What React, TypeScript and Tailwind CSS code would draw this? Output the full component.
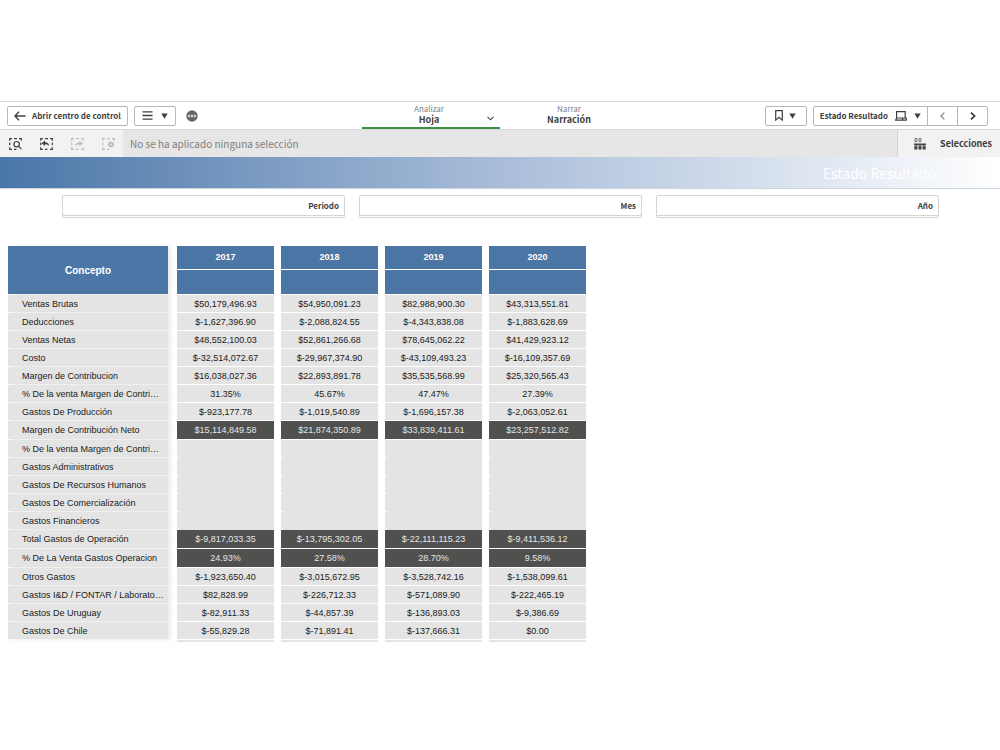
import clsx from 'clsx';

const YEARS = ['2017', '2018', '2019', '2020'];

type Row = {
  label: string;
  values?: string[];
  dark?: boolean;
};

const ROWS: Row[] = [
  { label: 'Ventas Brutas', values: ['$50,179,496.93', '$54,950,091.23', '$82,988,900.30', '$43,313,551.81'] },
  { label: 'Deducciones', values: ['$-1,627,396.90', '$-2,088,824.55', '$-4,343,838.08', '$-1,883,628.69'] },
  { label: 'Ventas Netas', values: ['$48,552,100.03', '$52,861,266.68', '$78,645,062.22', '$41,429,923.12'] },
  { label: 'Costo', values: ['$-32,514,072.67', '$-29,967,374.90', '$-43,109,493.23', '$-16,109,357.69'] },
  { label: 'Margen de Contribucion', values: ['$16,038,027.36', '$22,893,891.78', '$35,535,568.99', '$25,320,565.43'] },
  { label: '% De la venta Margen de Contri…', values: ['31.35%', '45.67%', '47.47%', '27.39%'] },
  { label: 'Gastos De Producción', values: ['$-923,177.78', '$-1,019,540.89', '$-1,696,157.38', '$-2,063,052.61'] },
  { label: 'Margen de Contribución Neto', values: ['$15,114,849.58', '$21,874,350.89', '$33,839,411.61', '$23,257,512.82'], dark: true },
  { label: '% De la venta Margen de Contri…' },
  { label: 'Gastos Administrativos' },
  { label: 'Gastos De Recursos Humanos' },
  { label: 'Gastos De Comercialización' },
  { label: 'Gastos Financieros' },
  { label: 'Total Gastos de Operación', values: ['$-9,817,033.35', '$-13,795,302.05', '$-22,111,115.23', '$-9,411,536.12'], dark: true },
  { label: '% De La Venta Gastos Operacion', values: ['24.93%', '27.58%', '28.70%', '9.58%'], dark: true },
  { label: 'Otros Gastos', values: ['$-1,923,650.40', '$-3,015,672.95', '$-3,528,742.16', '$-1,538,099.61'] },
  { label: 'Gastos I&D / FONTAR / Laborato…', values: ['$82,828.99', '$-226,712.33', '$-571,089.90', '$-222,465.19'] },
  { label: 'Gastos De Uruguay', values: ['$-82,911.33', '$-44,857.39', '$-136,893.03', '$-9,386.69'] },
  { label: 'Gastos De Chile', values: ['$-55,829.28', '$-71,891.41', '$-137,666.31', '$0.00'] },
];

function Caret() {
  return (
    <svg width="7" height="6" viewBox="0 0 7 6" fill="#404040" aria-hidden="true">
      <path d="M0.3 0.5h6.4L3.5 5.7z" />
    </svg>
  );
}

// Dashed selection frame shared by the four selection tools
function Marquee({ children }: { children: React.ReactNode }) {
  return (
    <svg width="13" height="12" viewBox="0 0 13 12" fill="none" stroke="currentColor" strokeWidth="1.2" aria-hidden="true">
      <path d="M0.7 2.7V0.7H3M5 0.7h3M10 0.7h2.3v2M0.7 4.6v2.6M0.7 9.2v2.1H3M5 11.3h2.4" />
      {children}
    </svg>
  );
}

function TopBar() {
  return (
    <header className="grid grid-cols-[1fr_auto_1fr] border-y border-[#d9d9d9] bg-white">
      <div className="flex items-center gap-[6px] pl-[7px]">
        <button className="flex h-5 items-center gap-[6px] rounded-xs border border-[#b8b8b8] px-[6px] font-bold">
          <svg width="12" height="10" viewBox="0 0 12 10" fill="none" stroke="#404040" strokeWidth="1.4" aria-hidden="true">
            <path d="M11.5 5H1M5 0.8L0.9 5L5 9.2" />
          </svg>
          Abrir centro de control
        </button>
        <button aria-label="Navegación" className="flex h-5 items-center gap-2 rounded-xs border border-[#b8b8b8] px-[7px]">
          <svg width="11" height="9" viewBox="0 0 11 9" stroke="#404040" strokeWidth="1.3" aria-hidden="true">
            <path d="M0.5 0.8h10M0.5 4.5h10M0.5 8.2h10" />
          </svg>
          <Caret />
        </button>
        <button aria-label="Más" className="ml-1">
          <svg width="12" height="12" viewBox="0 0 12 12" aria-hidden="true">
            <circle cx="6" cy="6" r="5.7" fill="#666" />
            <g fill="none" stroke="#fff" strokeWidth="0.8">
              <circle cx="3.1" cy="6" r="0.9" />
              <circle cx="6" cy="6" r="0.9" />
              <circle cx="8.9" cy="6" r="0.9" />
            </g>
          </svg>
        </button>
      </div>

      <nav className="flex">
        <a href="#hoja" className="relative flex w-[138px] flex-col items-center border-b-2 border-[#3f8f47] pt-[2px] pr-1 pb-px">
          <span className="text-[8px] leading-[10px] text-[#808080]">Analizar</span>
          <span className="text-[9px] leading-3 font-bold">Hoja</span>
          <svg className="absolute top-[14px] right-[6px]" width="7" height="5" viewBox="0 0 7 5" fill="none" stroke="#404040" strokeWidth="1.1" aria-hidden="true">
            <path d="M0.5 0.8L3.5 3.8L6.5 0.8" />
          </svg>
        </a>
        <a href="#narracion" className="flex w-[138px] flex-col items-center pt-[2px]">
          <span className="text-[8px] leading-[10px] text-[#808080]">Narrar</span>
          <span className="text-[9px] leading-3 font-bold">Narración</span>
        </a>
      </nav>

      <div className="flex items-center justify-end gap-[6px] pr-3">
        <button aria-label="Marcadores" className="flex h-5 w-[42px] items-center justify-center gap-[6px] rounded-xs border border-[#b8b8b8]">
          <svg width="8" height="11" viewBox="0 0 8 11" fill="none" stroke="#404040" strokeWidth="1.2" aria-hidden="true">
            <path d="M0.7 0.7h6.6v9.4L4 7.2L0.7 10.1z" />
          </svg>
          <Caret />
        </button>
        <div className="flex h-5 rounded-xs border border-[#b8b8b8]">
          <button className="flex items-center gap-[7px] px-[6px] font-bold">
            Estado Resultado
            <svg width="12" height="10" viewBox="0 0 12 10" fill="none" stroke="#404040" strokeWidth="1.2" aria-hidden="true">
              <path d="M1.6 7V0.7h8.6V7M7.6 7H1.6L0.7 9.1h10.6V7H7.6v2" />
            </svg>
            <Caret />
          </button>
          <button aria-label="Hoja anterior" className="flex w-[30px] items-center justify-center border-l border-[#b8b8b8]">
            <svg width="5" height="8" viewBox="0 0 5 8" fill="none" stroke="#808080" strokeWidth="1.2" aria-hidden="true">
              <path d="M4.4 0.6L1 4l3.4 3.4" />
            </svg>
          </button>
          <button aria-label="Hoja siguiente" className="flex w-[30px] items-center justify-center border-l border-[#b8b8b8]">
            <svg width="6" height="8" viewBox="0 0 6 8" fill="none" stroke="#333" strokeWidth="1.6" aria-hidden="true">
              <path d="M1 0.6L4.6 4L1 7.4" />
            </svg>
          </button>
        </div>
      </div>
    </header>
  );
}

function SelectionBar() {
  return (
    <div className="flex h-[27px] bg-[#e6e6e6]">
      <div className="flex w-[123px] items-center gap-[18px] bg-[#f2f2f2] pl-[9px]">
        <button aria-label="Búsqueda inteligente">
          <Marquee>
            <circle cx="7.6" cy="6.2" r="2.7" />
            <path d="M9.6 8.2L12.3 11.2" />
          </Marquee>
        </button>
        <button aria-label="Paso atrás">
          <Marquee>
            <path d="M12.3 4.6v2.6M12.3 9.2v2.1H10" />
            <path d="M1.6 5.2L5 2.5v1.8c2.6 0 4 1.4 4.4 4C8.2 6.7 6.8 6.2 5 6.2v1.8z" fill="currentColor" stroke="none" />
          </Marquee>
        </button>
        <button aria-label="Paso adelante" disabled className="text-[#bdbdbd]">
          <Marquee>
            <path d="M12.3 9.2v2.1H10" />
            <path d="M12 5.4L8.4 2.7v1.8c-2.6 0-4 1.4-4.4 4c1.2-1.6 2.6-2.1 4.4-2.1v1.8z" fill="currentColor" stroke="none" />
          </Marquee>
        </button>
        <button aria-label="Borrar selecciones" disabled className="text-[#bdbdbd]">
          <Marquee>
            <circle cx="9" cy="6.5" r="3" fill="currentColor" stroke="none" />
            <path d="M7.9 5.4l2.2 2.2M10.1 5.4L7.9 7.6" stroke="#f2f2f2" strokeWidth="0.8" />
          </Marquee>
        </button>
      </div>
      <p className="flex-1 pl-[7px] text-[10px] leading-[27px] text-[#808080]">No se ha aplicado ninguna selección</p>
      <button className="flex items-center gap-[14px] border-l border-[#d4d4d4] bg-[#f2f2f2] pr-[8px] pl-4 text-[9px] font-bold">
        <svg width="12" height="12" viewBox="0 0 12 12" aria-hidden="true">
          <path d="M1 0.6h2v3H1zM5 0.6h2v3H5z" fill="none" stroke="#666" strokeWidth="0.9" />
          <path d="M0 5.5h12v2H0zM0.4 7.5h3v4.1h-3zM4.5 7.5h3v4.1h-3zM8.6 7.5h3v4.1h-3z" fill="#404040" />
          <path d="M0 7.7h12" stroke="#f2f2f2" strokeWidth="0.6" />
        </svg>
        Selecciones
      </button>
    </div>
  );
}

function Filters() {
  return (
    <div className="flex gap-[14px] pt-[6px] pr-[61px] pl-[62px]">
      {['Periodo', 'Mes', 'Año'].map((name) => (
        <button key={name} className="flex-1 rounded-xs border border-[#d4d4d4] pb-px text-right font-bold">
          <span className="block border-b border-[#d4d4d4] pr-[5px] leading-[19px]">{name}</span>
        </button>
      ))}
    </div>
  );
}

function ResultsTable() {
  return (
    <table className="mt-[27px] ml-px table-fixed border-separate border-spacing-x-[7px] border-spacing-y-px font-['Liberation_Sans',Arial,sans-serif] text-[9px] text-[#1a1a1a]">
      <colgroup>
        <col className="w-[162px]" />
        {YEARS.map((year) => (
          <col key={year} className="w-[97px]" />
        ))}
      </colgroup>
      <thead className="text-white">
        <tr>
          <th rowSpan={2} className="p-0">
            <div className="flex h-12 w-40 items-center justify-center bg-[#4c76a5] text-[10px] shadow-[3px_1px_4px_rgba(0,0,0,0.08)]">Concepto</div>
          </th>
          {YEARS.map((year) => (
            <th key={year} className="h-[23px] bg-[#4c76a5] p-0">{year}</th>
          ))}
        </tr>
        <tr>
          {YEARS.map((year) => (
            <td key={year} className="h-6 bg-[#4c76a5] p-0" />
          ))}
        </tr>
      </thead>
      <tbody>
        {ROWS.map((row, i) => (
          <tr key={i}>
            <th scope="row" className="p-0 text-left font-normal">
              <div
                className={clsx(
                  'w-40 bg-[#e4e4e4] pt-px pl-[14px] leading-4 whitespace-nowrap shadow-[3px_1px_4px_rgba(0,0,0,0.08)]',
                  row.dark ? 'h-[18px]' : 'h-[17px]',
                )}
              >
                {row.label}
              </div>
            </th>
            {YEARS.map((year, col) => (
              <td
                key={year}
                className={clsx('p-0 text-center align-top leading-4', row.dark ? 'bg-[#50504e] text-[#e6e6e6]' : 'bg-[#e4e4e4]', row.values && 'pt-px')}
              >
                {row.values ? row.values[col] : <div className="-mb-px ml-[2px] h-[18px] bg-[#e4e4e4]" />}
              </td>
            ))}
          </tr>
        ))}
        <tr>
          <td className="p-0" />
          {YEARS.map((year) => (
            <td key={year} className="h-[2px] bg-[#e4e4e4] p-0" />
          ))}
        </tr>
      </tbody>
    </table>
  );
}

export default function App() {
  return (
    <div className="min-h-screen bg-white pt-[101px] font-['Noto_Sans_CJK_SC',sans-serif] text-[8px] text-[#404040]">
      <TopBar />
      <SelectionBar />
      <div className="h-8 border-b border-[#c9d5e3] bg-linear-to-r from-[#4a76a8] via-[#a9bdd9] to-white pr-16">
        <h1 className="text-right text-[14px] leading-8 text-white">Estado Resultado</h1>
      </div>
      <Filters />
      <ResultsTable />
    </div>
  );
}
